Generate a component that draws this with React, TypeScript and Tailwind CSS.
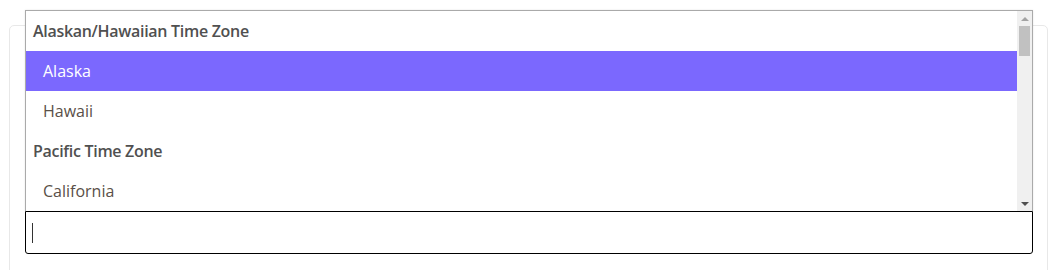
const groups = [
  { label: 'Alaskan/Hawaiian Time Zone', options: ['Alaska', 'Hawaii'] },
  { label: 'Pacific Time Zone', options: ['California'] },
];

export default function App() {
  return (
    <div className="relative h-[270px] w-[1056px] overflow-hidden bg-white" style={{ fontFamily: '"Open Sans", Lato, sans-serif' }}>
      <div className="absolute left-[9px] top-[25px] h-[300px] w-[1039px] rounded-[5px] border border-[#e8e8e8]" />
      <div className="relative ml-[25px] mt-[10px] w-[1008px]">
        <div className="flex h-[201px] border border-b-0 border-[#aaaaaa] bg-white shadow-[0_0_2px_rgba(0,0,0,0.1)]">
          <ul className="flex-1">
            {groups.map((g) => (
              <li key={g.label}>
                <div className="flex h-[40px] items-center px-[7px] text-[16px] font-semibold tracking-[-0.3px] text-[#505050]">{g.label}</div>
                <ul>
                  {g.options.map((o, i) => (
                    <li
                      key={o}
                      className={
                        'flex h-[40px] items-center pl-[17px] text-[16px] ' +
                        (g.label.startsWith('Alaskan') && i === 0 ? 'bg-[#7b68fe] text-white' : 'text-[#5a5048]')
                      }
                    >
                      {o}
                    </li>
                  ))}
                </ul>
              </li>
            ))}
          </ul>
          <div className="flex w-[15px] flex-col bg-[#f0f0f0]">
            <div className="flex h-[15px] items-center justify-center">
              <div className="h-0 w-0 border-x-[4px] border-b-[4px] border-x-transparent border-b-[#a3a3a3]" />
            </div>
            <div className="mx-[2px] h-[30px] bg-[#c1c1c1]" />
            <div className="flex-1" />
            <div className="flex h-[15px] items-center justify-center">
              <div className="h-0 w-0 border-x-[4px] border-t-[4px] border-x-transparent border-t-[#505050]" />
            </div>
          </div>
        </div>
        <div className="flex h-[43px] items-center rounded-b-[3px] border border-black bg-white pl-[6px]">
          <div className="h-[20px] w-px bg-[#333]" />
        </div>
      </div>
    </div>
  );
}
